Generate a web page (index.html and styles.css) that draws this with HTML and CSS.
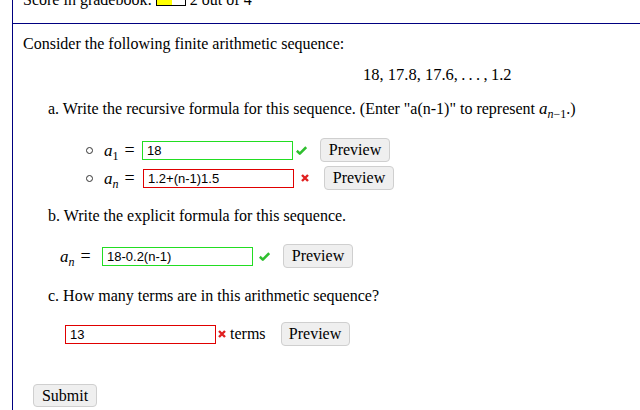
FILE: index.html
```html
<!DOCTYPE html>
<html>
<head>
<meta charset="utf-8">
<link rel="stylesheet" href="styles.css">
</head>
<body>
<div class="frame">
  <div class="score">
    <div class="score-line">Score in gradebook: <span class="bar"><span class="bar-fill"></span></span> 2 out of 4</div>
  </div>
  <div class="content">
    <p class="intro">Consider the following finite arithmetic sequence:</p>
    <p class="seq">18, 17.8, 17.6,&#8201;.&#8201;.&#8201;.&#8201;,&#8201;1.2</p>
    <p class="part">a. Write the recursive formula for this sequence. (Enter "a(n-1)" to represent <span class="mi">a</span><sub class="msub"><i>n</i>−1</sub>.)</p>
    <ul class="answers">
      <li class="row row-a1">
        <span class="bullet"></span>
        <span class="math m1"><span class="mi">a</span><sub class="msub">1</sub><span class="eq">=</span></span>
        <span class="field ok">18</span>
        <span class="mark"><svg width="11" height="9" viewBox="0 0 11 9"><path d="M0.8 4.8 L3.8 7.6 L10.2 1.2" fill="none" stroke="#2fbf2f" stroke-width="2.6" stroke-linejoin="round"/></svg></span>
        <button class="btn btn-r1">Preview</button>
      </li>
      <li class="row row-an">
        <span class="bullet"></span>
        <span class="math m2"><span class="mi">a</span><sub class="msub"><i>n</i></sub><span class="eq">=</span></span>
        <span class="field bad">1.2+(n-1)1.5</span>
        <span class="mark xmark"><svg width="8" height="8" viewBox="0 0 8 8"><path d="M1 1 L7 7 M7 1 L1 7" stroke="#e02020" stroke-width="2.4"/></svg></span>
        <button class="btn btn-r2">Preview</button>
      </li>
    </ul>
    <p class="part part-b">b. Write the explicit formula for this sequence.</p>
    <div class="row row-b">
      <span class="math m3"><span class="mi">a</span><sub class="msub"><i>n</i></sub><span class="eq">=</span></span>
      <span class="field ok">18-0.2(n-1)</span>
      <span class="mark mark-b"><svg width="11" height="9" viewBox="0 0 11 9"><path d="M0.8 4.8 L3.8 7.6 L10.2 1.2" fill="none" stroke="#2fbf2f" stroke-width="2.6" stroke-linejoin="round"/></svg></span>
      <button class="btn btn-b">Preview</button>
    </div>
    <p class="part part-c">c. How many terms are in this arithmetic sequence?</p>
    <div class="row row-c">
      <span class="field bad">13</span>
      <span class="xmark-c"><svg width="8" height="8" viewBox="0 0 8 8"><path d="M1 1 L7 7 M7 1 L1 7" stroke="#e02020" stroke-width="2.4"/></svg></span>
      <span class="terms">terms</span>
      <button class="btn btn-c">Preview</button>
    </div>
    <button class="btn submit">Submit</button>
  </div>
</div>
</body>
</html>
```
FILE: styles.css
```css
html, body {
  margin: 0;
  padding: 0;
  background: #fff;
}
body {
  font-family: "Liberation Serif", "Times New Roman", serif;
  font-size: 16px;
  line-height: 18px;
  color: #000;
  overflow: hidden;
}
.frame {
  margin-left: 12px;
  border-left: 1px solid #000080;
  min-height: 410px;
}
.score {
  height: 23px;
  border-bottom: 1px solid #000080;
  overflow: hidden;
  padding-left: 10px;
}
.score-line {
  margin-top: -9px;
  white-space: nowrap;
}
.bar {
  display: inline-block;
  width: 28px;
  height: 12px;
  border: 1px solid #000;
  vertical-align: -1px;
}
.bar-fill {
  display: block;
  width: 15px;
  height: 100%;
  background: #ffff00;
}
.content {
  padding-left: 10px;
}
p {
  margin: 0;
}
.intro {
  margin-top: 11px;
}
.seq {
  margin-top: 13px;
  margin-left: 340px;
  font-size: 16.5px;
}
.part {
  margin-top: 16px;
  margin-left: 25px;
}
.mi {
  font-style: italic;
  font-size: 17px;
}
.msub {
  font-size: 12px;
  vertical-align: -4px;
  line-height: 0;
}
.answers {
  list-style: none;
  margin: 20px 0 0 0;
  padding: 0;
}
.row {
  display: flex;
  align-items: center;
  height: 24px;
}
.row-an {
  margin-top: 4px;
}
.bullet {
  width: 5px;
  height: 5px;
  border: 1px solid #333;
  border-radius: 50%;
  margin-left: 63px;
  flex: none;
}
.math {
  display: block;
  white-space: nowrap;
  line-height: 18px;
  flex: none;
}
.m1 {
  margin-left: 11px;
  width: 38px;
}
.m2 {
  margin-left: 11px;
  width: 39px;
}
.m3 {
  margin-left: 37px;
  width: 42px;
}
.eq {
  font-size: 18px;
  margin-left: 6px;
}
.field {
  box-sizing: border-box;
  width: 151px;
  height: 19px;
  padding: 0 4px;
  font-family: "Liberation Sans", Arial, sans-serif;
  font-size: 13px;
  line-height: 17px;
  flex: none;
  background: #fff;
}
.ok {
  border: 1px solid #22dd22;
}
.bad {
  border: 1px solid #e00000;
}
.mark {
  display: flex;
  margin-left: 3px;
}
.xmark {
  margin-left: 7px;
}
.mark-b {
  margin-left: 6px;
}
.btn {
  box-sizing: border-box;
  height: 24px;
  width: 70px;
  padding: 0;
  font-family: "Liberation Serif", "Times New Roman", serif;
  font-size: 16px;
  color: #000;
  background: #efefef;
  border: 1px solid #cfcfcf;
  border-radius: 4px;
  flex: none;
}
.btn-r1 {
  margin-left: 13px;
}
.btn-r2 {
  margin-left: 15px;
}
.part-b {
  margin-top: 17px;
}
.row-b {
  margin-top: 19px;
}
.btn-b {
  margin-left: 13px;
}
.part-c {
  margin-top: 19px;
}
.row-c {
  margin-top: 17px;
  padding-left: 42px;
}
.xmark-c {
  display: flex;
  margin-left: 2px;
}
.terms {
  margin-left: 4px;
}
.btn-c {
  margin-left: 15px;
  width: 69px;
}
.submit {
  display: block;
  margin-top: 38px;
  margin-left: 10px;
  width: 64px;
  height: 23px;
}
```
